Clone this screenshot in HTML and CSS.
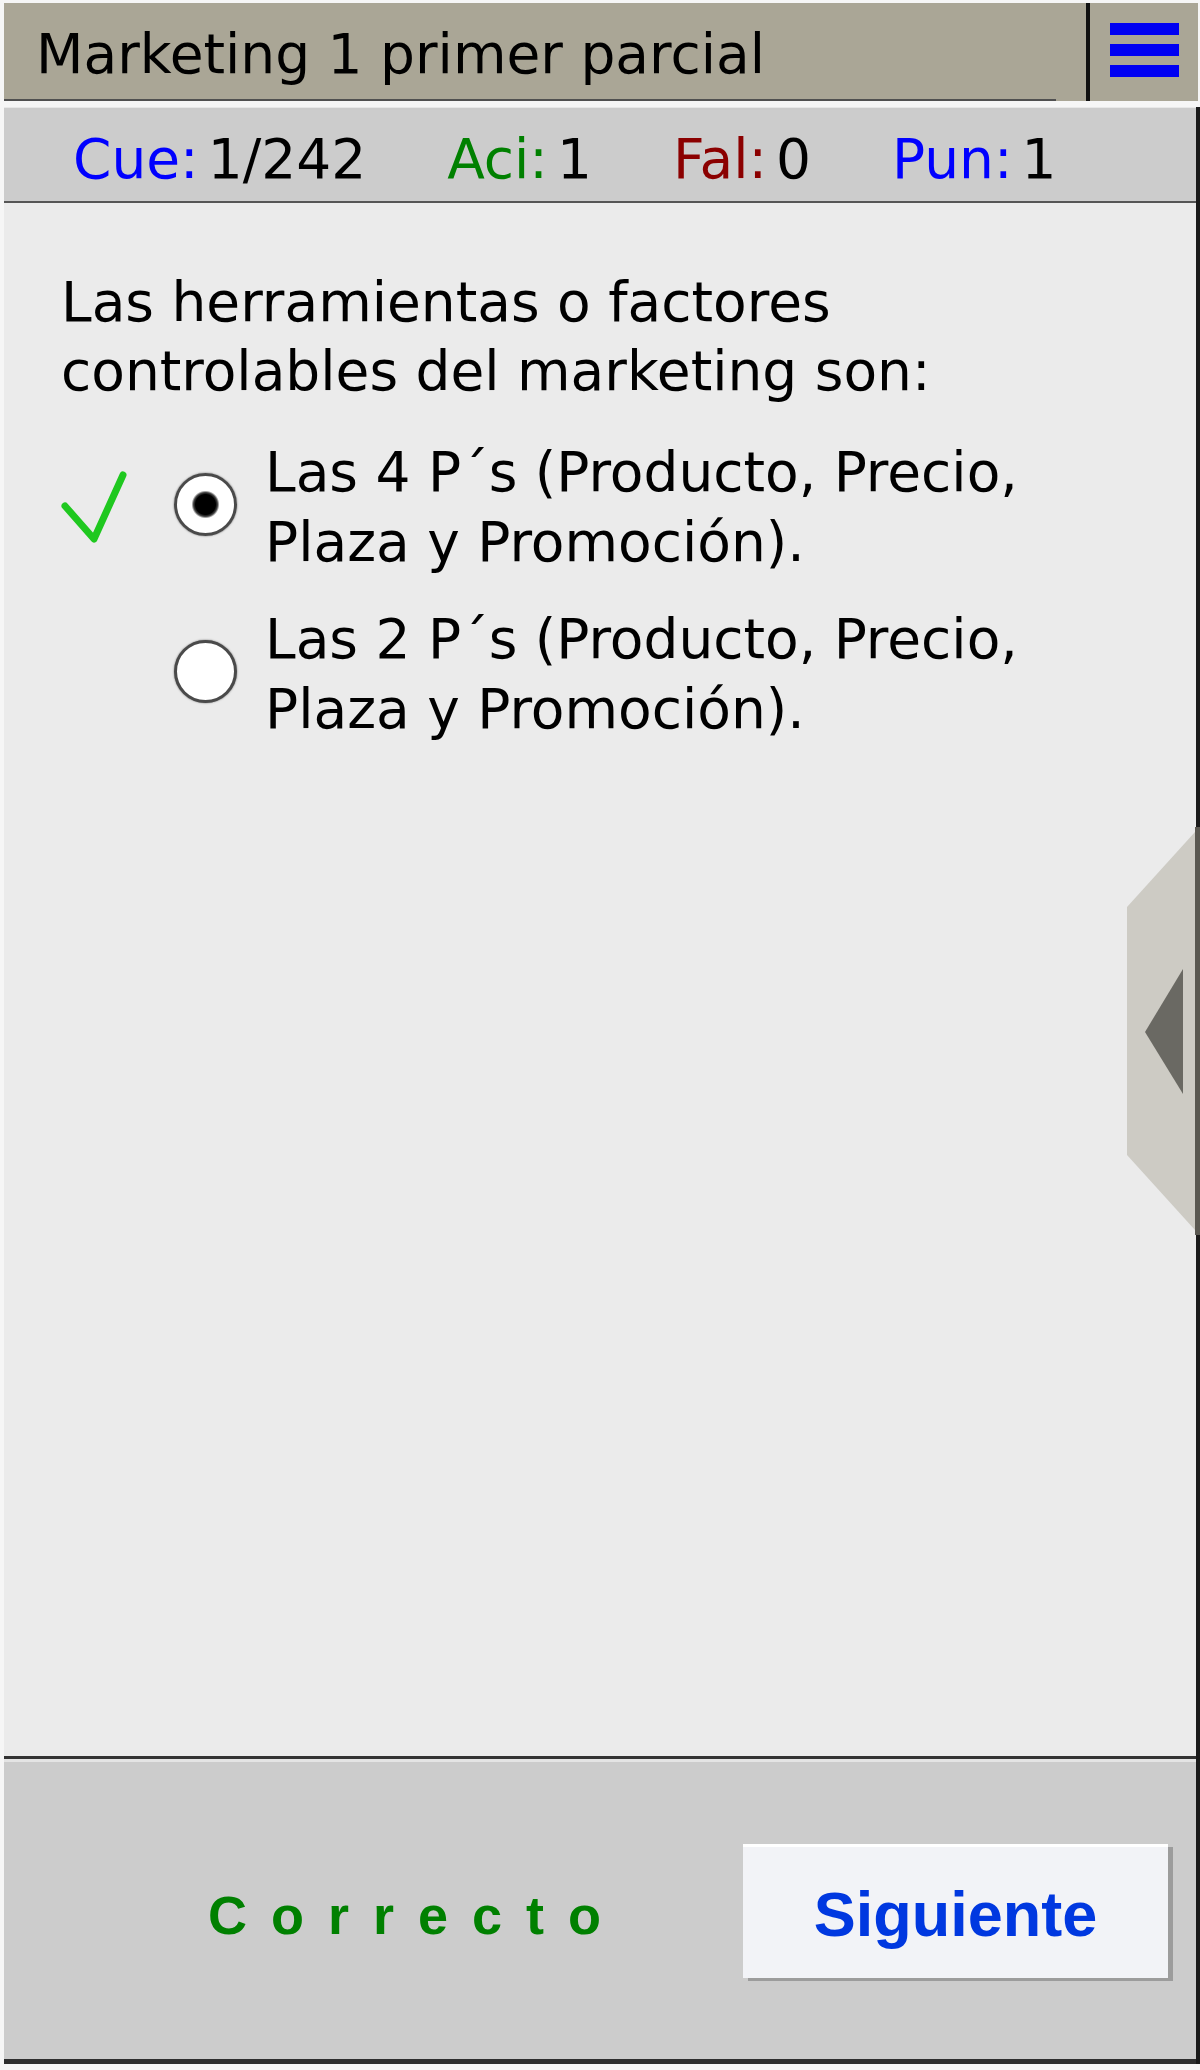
FILE: index.html
```
<!DOCTYPE html>
<html lang="es">
<head>
    <meta charset="UTF-8">
    <meta name="viewport" content="width=device-width, initial-scale=1.0">
    <title>Marketing 1 primer parcial</title>
    <link rel="stylesheet" href="styles.css">
</head>
<body>

    <header class="title-bar">
        <div class="title">Marketing 1 primer parcial</div>
        <button class="menu-button" aria-label="Menú">
            <span></span>
            <span></span>
            <span></span>
        </button>
    </header>

    <div class="panel">
        <div class="stats">
            <div class="stat"><span class="stat-label blue">Cue:</span><span>1/242</span></div>
            <div class="stat"><span class="stat-label green">Aci:</span><span>1</span></div>
            <div class="stat"><span class="stat-label red">Fal:</span><span>0</span></div>
            <div class="stat"><span class="stat-label blue">Pun:</span><span>1</span></div>
        </div>

        <main class="question-area">
            <p class="question">Las herramientas o factores controlables del marketing son:</p>

            <ul class="options">
                <li class="option">
                    <span class="mark">
                        <svg width="66" height="74" viewBox="0 0 66 74">
                            <polyline points="4,36 33,69 62,5" fill="none" stroke="#1fc81f" stroke-width="7" stroke-linecap="round" stroke-linejoin="round"/>
                        </svg>
                    </span>
                    <span class="radio checked"></span>
                    <span class="option-text">Las 4 P´s (Producto, Precio, Plaza y Promoción).</span>
                </li>
                <li class="option">
                    <span class="mark"></span>
                    <span class="radio"></span>
                    <span class="option-text">Las 2 P´s (Producto, Precio, Plaza y Promoción).</span>
                </li>
            </ul>

            <div class="side-tab">
                <svg width="73" height="408" viewBox="0 0 73 408">
                    <polygon points="68,5 0,80 0,328 68,403" fill="#cdcbc4"/>
                    <polygon points="56,142 18,205 56,267" fill="#6a6963"/>
                    <rect x="68" y="0" width="5" height="408" fill="#5a5851"/>
                </svg>
            </div>
        </main>

        <footer class="footer">
            <div class="result">Correcto</div>
            <button class="next-button">Siguiente</button>
        </footer>
    </div>

</body>
</html>
```

FILE: styles.css
```
body {
    margin: 0;
    padding: 0;
    background-color: #f6f6f6;
    font-family: 'DejaVu Sans', Verdana, sans-serif;
    width: 1200px;
    height: 2070px;
    overflow: hidden;
}

.title-bar {
    display: flex;
    height: 98px;
    margin: 3px 2px 0 4px;
    background-color: #aaa696;
}

.title {
    flex: 1;
    display: flex;
    align-items: center;
    padding: 5px 0 0 32px;
    margin-right: 30px;
    border-bottom: 2px solid #505050;
    font-size: 55px;
    color: #000;
}

.menu-button {
    width: 112px;
    padding: 0 0 5px 0;
    border: none;
    border-left: 4px solid #111;
    background: none;
    display: flex;
    flex-direction: column;
    justify-content: center;
    align-items: center;
    gap: 9px;
}

.menu-button span {
    display: block;
    width: 69px;
    height: 12px;
    background-color: #0000f2;
}

.panel {
    margin: 6px 0 0 4px;
    height: 1957px;
    border-right: 4px solid #1a1a1a;
    display: flex;
    flex-direction: column;
}

.stats {
    display: flex;
    align-items: center;
    gap: 81px;
    height: 96px;
    padding: 8px 0 0 69px;
    box-sizing: border-box;
    background-color: #cccccc;
    border-top: 1px solid #e8e8e8;
    border-bottom: 2px solid #555;
    font-size: 55px;
}

.stat-label {
    margin-right: 9px;
}

.blue {
    color: #0000ff;
}

.green {
    color: #008000;
}

.red {
    color: #8b0000;
}

.question-area {
    position: relative;
    flex: 1;
    background-color: #ebebeb;
    padding: 65px 0 0 57px;
    border-bottom: 3px solid #333;
}

.question {
    margin: 0;
    width: 900px;
    font-size: 55px;
    line-height: 69px;
}

.options {
    list-style: none;
    margin: 31px 0 0 0;
    padding: 0;
    display: flex;
    flex-direction: column;
    gap: 27px;
}

.option {
    display: flex;
    align-items: center;
}

.mark {
    width: 66px;
    height: 74px;
    margin-right: 47px;
}

.radio {
    width: 57px;
    height: 57px;
    border-radius: 50%;
    border: 3px solid #4a4a4a;
    background-color: #fff;
    box-shadow: 0 0 2px #666;
    margin: -6px 28px 0 0;
}

.radio.checked {
    background: radial-gradient(circle, #000 0 10px, #444 12px, #fff 14px);
}

.option-text {
    width: 820px;
    font-size: 55px;
    line-height: 70px;
}

.side-tab {
    position: absolute;
    right: -4px;
    top: 624px;
    line-height: 0;
}

.footer {
    display: flex;
    align-items: center;
    flex: 0 0 305px;
    box-sizing: border-box;
    padding: 0 28px 0 204px;
    background-color: #cccccc;
    border-top: 3px solid #e4e4e4;
    border-bottom: 5px solid #2e2e2e;
}

.result {
    font-family: 'Liberation Sans', Arial, sans-serif;
    font-weight: bold;
    font-size: 54px;
    letter-spacing: 24px;
    color: #008000;
    margin-top: 8px;
}

.next-button {
    margin-left: auto;
    width: 425px;
    height: 134px;
    background-color: #f2f3f7;
    border: none;
    border-top: 3px solid #fff;
    box-shadow: 5px 3px 0 #9c9c9c;
    font-family: 'Liberation Sans', Arial, sans-serif;
    font-weight: bold;
    font-size: 63px;
    color: #0038e0;
    padding: 4px 0 0 0;
}
```
